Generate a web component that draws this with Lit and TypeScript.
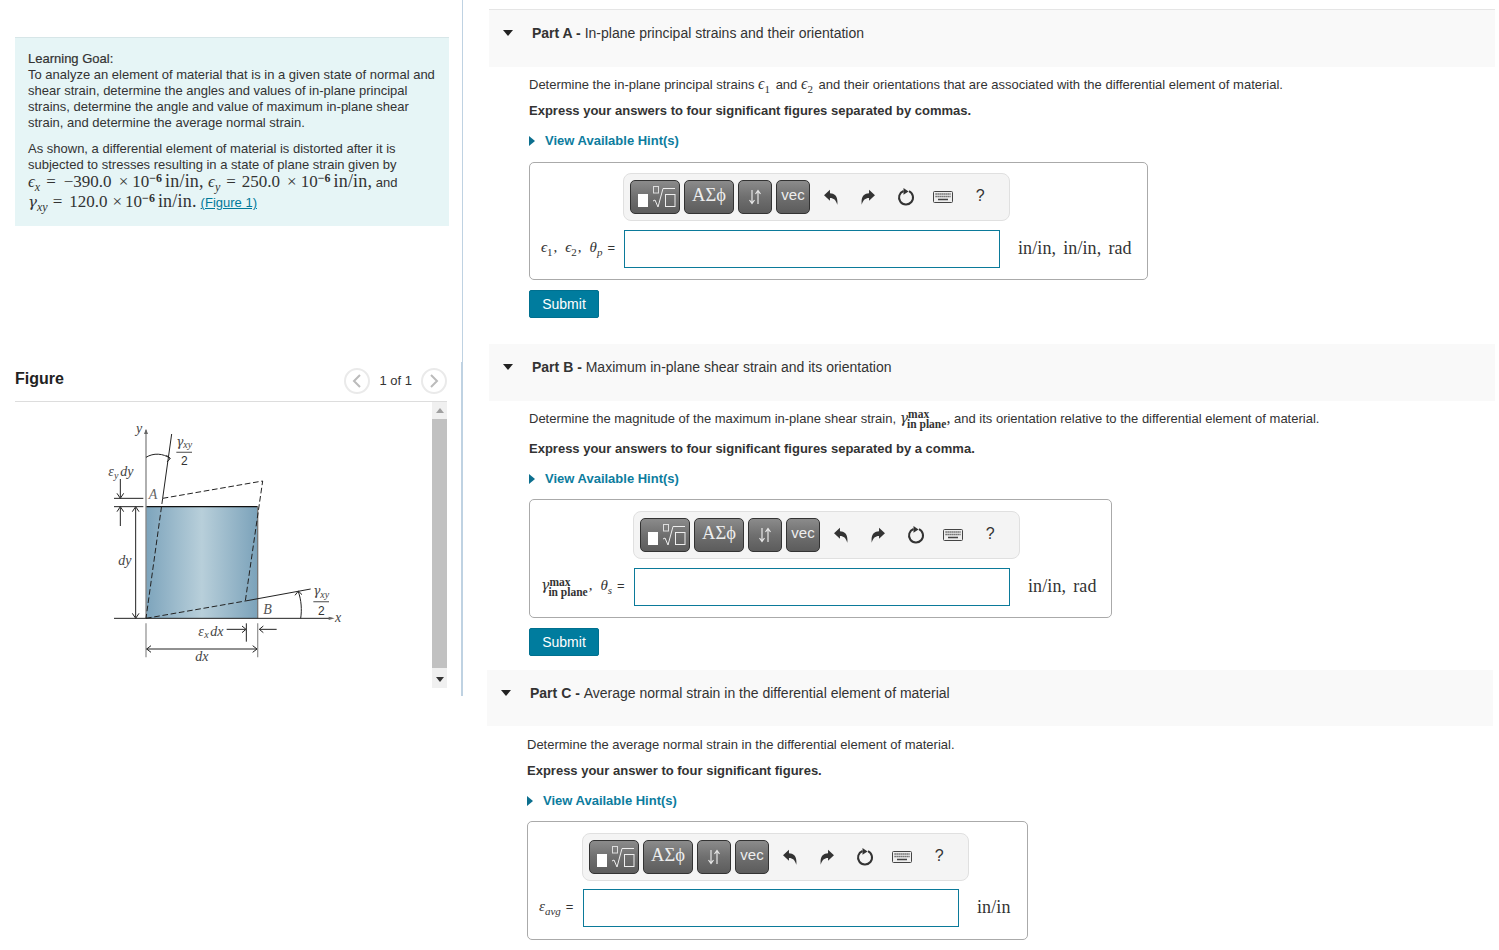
import { LitElement, html, css, svg } from "lit";
import { customElement } from "lit/decorators.js";

const undoIcon = (flip = false) => html`<svg class=${flip ? "flip" : ""} width="14" height="16" viewBox="0 0 40 46"><path d="M0 18 L17 2 V12 C31 12 41 22 38 45 C34 32 28 26 17 26 V34 Z" fill="#333"/></svg>`;
const resetIcon = html`<svg width="18" height="18" viewBox="0 0 18 18"><path d="M6.500 3 A7 7 0 1 0 12 3.200" fill="none" stroke="#333" stroke-width="2"/><path d="M6.500 0 L11.500 3.400 L6.500 6.800 Z" fill="#333"/></svg>`;
const kbIcon = html`<svg width="20" height="12" viewBox="0 0 20 12"><rect x=".5" y=".5" width="19" height="11" rx="1" fill="#eee" stroke="#444"/><path d="M2.500 3h15M2.500 5.500h15" stroke="#444" stroke-width="1.400" stroke-dasharray="1.200 .8"/><path d="M5 8.500h10" stroke="#444" stroke-width="1.500"/></svg>`;
const tplIcon = html`<svg class="tpl" width="38" height="28" viewBox="0 0 38 28"><rect x="0" y="11" width="10" height="13" fill="#fff"/><rect x="15.500" y="3.500" width="5" height="6.500" fill="none" stroke="#ddd"/><path d="M15 18 l2 -1 l3 7 l5 -18.500 h12" fill="none" stroke="#eee" stroke-width="1"/><rect x="27.500" y="11.500" width="9.500" height="12" fill="none" stroke="#eee"/></svg>`;
const arrowsIcon = html`<svg width="14" height="16" viewBox="0 0 14 16"><path d="M4 1v13M1.500 11l2.500 3.500l2.500-3.500M10 15v-13M7.500 5l2.500-3.500l2.500 3.500" fill="none" stroke="#e8e8e8" stroke-width="1.200"/></svg>`;

const gammaFrac = (x: number, y: number) => svg`
  <text x=${x} y=${y} class="g">γ</text><text x=${x + 21} y=${y + 7} class="s">xy</text>
  <path d="M${x} ${y + 19}H${x + 47}" stroke="#777" stroke-width="4"/>
  <text x=${x + 14} y=${y + 58} class="n">2</text>`;

const diagram = html`<svg class="diagram" width="270" height="260" viewBox="0 0 810 780">
  <defs>
    <linearGradient id="m" x1="0" x2="1" y1="0" y2="0">
      <stop offset="0" stop-color="#7da4bc"/><stop offset=".5" stop-color="#b8cfda"/><stop offset="1" stop-color="#7ba2ba"/>
    </linearGradient>
  </defs>
  <style>
    .t{font:italic 42px "Liberation Serif",serif;fill:#444}
    .g{font:italic 36px "DejaVu Serif",serif;fill:#444}
    .s{font:italic 30px "Liberation Serif",serif;fill:#444}
    .n{font:36px "Liberation Sans",sans-serif;fill:#333}
    .ta{fill:#666}
    .tb{fill:#555}
  </style>
  <rect x="168" y="290" width="335" height="335" fill="url(#m)"/>
  <g fill="none" stroke-linecap="butt">
    <path d="M168 290H503" stroke="#111" stroke-width="4"/>
    <path d="M168 60V625" stroke="#888" stroke-width="4"/>
    <path d="M503 290V625" stroke="#777" stroke-width="4"/>
    <path d="M72 625H725" stroke="#222" stroke-width="3"/>
    <path d="M72 265H160M72 290H160" stroke="#222" stroke-width="3"/>
    <path d="M245 72L218 265" stroke="#222" stroke-width="3"/>
    <path d="M218 265L168 625M218 265L518 213L466 573M168 625L466 573" stroke="#222" stroke-width="3" stroke-dasharray="17 8"/>
    <path d="M466 573L662 537" stroke="#222" stroke-width="3"/>
    <path d="M168 142C190 128 220 130 240 145" stroke="#222" stroke-width="3"/>
    <path d="M632 625C636 600 634 570 625 545" stroke="#222" stroke-width="3"/>
    <path d="M91 207V262M91 348V293M137 293V622" stroke="#222" stroke-width="3"/>
    <path d="M168 640V742M503 640V742" stroke="#999" stroke-width="4"/>
    <path d="M170 717H501" stroke="#222" stroke-width="3"/>
    <path d="M410 658H466M469 640V695M560 658H508" stroke="#222" stroke-width="3"/>
    <path d="M81 250L91 265L101 250M81 305L91 290L101 305M127 305L137 290L147 305M127 610L137 625L147 610M183 707L170 717L183 727M488 707L501 717L488 727M456 648L468 658L456 668M520 648L508 658L520 668M229 136L241 145L231 156M615 556L625 543L636 554" stroke="#222" stroke-width="3"/>
  </g>
  <path d="M162 72L168 56L174 72ZM716 620L734 625L716 630Z" fill="#666"/>
  <text x="138" y="70" class="t">y</text>
  <text x="735" y="636" class="t">x</text>
  <text x="176" y="266" class="t ta">A</text>
  <text x="520" y="613" class="t tb">B</text>
  <text x="55" y="198" class="t">ε</text><text x="72" y="206" class="s">y</text><text x="91" y="198" class="t">dy</text>
  <text x="85" y="465" class="t">dy</text>
  <text x="325" y="677" class="t">ε</text><text x="343" y="684" class="s">x</text><text x="361" y="677" class="t">dx</text>
  <text x="316" y="753" class="t">dx</text>
  ${gammaFrac(259, 108)}
  ${gammaFrac(670, 556)}
</svg>`;

const eps = (s: unknown) => html`<span class="mi">ϵ</span><sub class="mr">${s}</sub>`;
const gammaStack = html`<span class="gam">γ</span><span class="stack"><span>max</span><span>in plane</span></span>`;

interface Part {
  cls: string;
  letter: string;
  title: string;
  desc: unknown;
  bold: string;
  label: unknown;
  unit: string;
  submit: boolean;
}

const parts: Part[] = [
  {
    cls: "a",
    letter: "A",
    title: "In-plane principal strains and their orientation",
    desc: html`Determine the in-plane principal strains <span class="m gapm">${eps(1)}</span> and <span class="m gapm">${eps(2)}</span> and their orientations that are associated with the differential element of material.`,
    bold: "Express your answers to four significant figures separated by commas.",
    label: html`<span class="m">${eps(1)}<span class="sep">,</span>${eps(2)}<span class="sep">,</span><span class="mi">θ</span><sub class="mi">p</sub></span><span class="eq">=</span>`,
    unit: "in/in, in/in, rad",
    submit: true,
  },
  {
    cls: "b",
    letter: "B",
    title: "Maximum in-plane shear strain and its orientation",
    desc: html`Determine the magnitude of the maximum in-plane shear strain, <span class="m">${gammaStack},</span> and its orientation relative to the differential element of material.`,
    bold: "Express your answers to four significant figures separated by a comma.",
    label: html`<span class="m">${gammaStack}<span class="sep">,</span><span class="mi">θ</span><sub class="mi">s</sub></span><span class="eq">=</span>`,
    unit: "in/in, rad",
    submit: true,
  },
  {
    cls: "c",
    letter: "C",
    title: "Average normal strain in the differential element of material",
    desc: html`Determine the average normal strain in the differential element of material.`,
    bold: "Express your answer to four significant figures.",
    label: html`<span class="m"><span class="mi">ε</span><sub class="mi">avg</sub></span><span class="eq">=</span>`,
    unit: "in/in",
    submit: false,
  },
];

@customElement("app-root")
export class AppRoot extends LitElement {
  static styles = css`
    :host { display: block; width: 1499px; height: 950px; overflow: hidden; background: #fff; color: #333; font: 13px/16px "Liberation Sans", Arial, sans-serif; }
    * { box-sizing: border-box; }
    .page { display: flex; align-items: flex-start; }
    .left { width: 463px; height: 696px; flex: none; border-right: 1px solid #bfd2e2; position: relative; padding: 37px 0 0 15px; }
    .left::after { content: ""; position: absolute; left: 461px; top: 362px; bottom: 0; width: 1px; background: #bfd2e2; }
    .goal { width: 434px; height: 189px; background: #e6f5f6; border-top: 1px solid #d7e6e8; padding: 13px 13px 0; }
    .goal p { margin: 0 0 10px; }
    .lg { -webkit-text-stroke: .2px #333; }
    .ml { display: block; height: 20px; line-height: 20px; white-space: nowrap; }
    .ml .m { font-size: 17px; }
    .ml sup { font-size: 12px; font-weight: bold; vertical-align: 5px; }
    .ml sub { font-size: 12px; }
    .rel { margin: 0 8px 0 6px; }
    .rel2 { margin: 0 6px; }
    .rel3 { margin: 0 7px 0 5px; }
    .tm { margin: 0 4px 0 7px; }
    .tm3 { margin: 0 3px 0 5px; }
    .in { font-size: 18px; letter-spacing: .2px; margin-left: 3px; }
    .goal-link { color: #00799a; text-decoration: underline; margin-left: 4px; }
    .m { font: 16px/16px "Liberation Serif", "DejaVu Serif", serif; color: #333; white-space: nowrap; }
    .gapm { margin-right: 2px; }
    .desc .m { line-height: 0; }
    .mi { font-family: "Liberation Serif", "DejaVu Serif", serif; font-style: italic; }
    .gam { font: italic 14px "DejaVu Serif", serif; }
    .ml .gam { font-size: 15px; }
    .mr { font-family: "Liberation Serif", serif; font-style: normal; }
    sub, sup { font-size: 11px; line-height: 0; }
    .stack { display: inline-flex; flex-direction: column; vertical-align: middle; font: bold 11.500px/10px "Liberation Serif", serif; margin: -4px 0 -4px -1px; }
    .stack span:first-child { padding-left: 1px; }
    .sep { margin-right: 8px; margin-left: 1px; }
    .eq { margin-left: 5px; }
    .fig-head { width: 432px; height: 40px; margin-top: 136px; display: flex; align-items: flex-start; justify-content: space-between; border-bottom: 1px solid #ddd; padding-top: 7px; }
    .fig-title { font-size: 16px; font-weight: bold; line-height: 20px; color: #222; }
    .pager { display: flex; align-items: center; gap: 9px; margin-top: -1px; }
    .pg { width: 26px; height: 26px; border: 2px solid #eaeaea; border-radius: 50%; display: flex; align-items: center; justify-content: center; background: #fff; }
    .view { display: flex; width: 432px; height: 286px; }
    .view-main { flex: 1; padding: 8px 0 0 75px; }
    .diagram { display: block; }
    .sb { width: 15px; background: #f0f0f0; display: flex; flex-direction: column; align-items: center; }
    .sb-arrow { height: 17px; flex: none; display: flex; align-items: center; justify-content: center; }
    .sb-arrow.down { margin-top: auto; }
    .sb-thumb { width: 15px; height: 249px; background: #c1c1c1; }
    .right { flex: 1; min-width: 0; padding: 9px 4px 0 26px; }
    .part-b { margin-top: 26px; }
    .part-c { margin: 14px 2px 0 -2px; }
    .header { height: 57px; background: #f9f9f9; display: flex; padding: 15px 0 0 14px; gap: 19px; font-size: 14px; }
    .part-a .header { height: 58px; border-top: 1px solid #e5e5e5; }
    .part-c .header { height: 56px; }
    .caret { width: 0; height: 0; border-left: 5.500px solid transparent; border-right: 5.500px solid transparent; border-top: 6px solid #222; margin-top: 5px; }
    .htitle b { color: #333; }
    .body { padding: 10px 0 0 40px; }
    .part-b .body { padding-top: 9px; }
    .part-c .body { padding-top: 11px; }
    .desc { height: 16px; margin: 0 0 10px; white-space: nowrap; }
    .part-b .desc { height: 21px; }
    .bold { margin: 0 0 14px; font-weight: bold; }
    .hint { display: flex; align-items: center; gap: 10px; font-weight: bold; color: #0c7c9e; }
    .hcaret { width: 0; height: 0; border-top: 5px solid transparent; border-bottom: 5px solid transparent; border-left: 6px solid #0c6f8e; }
    .box { width: fit-content; margin-top: 12px; border: 1px solid #aaa; border-radius: 5px; padding: 11px 16px 11px 11px; display: grid; grid-template-columns: auto 376px auto; row-gap: 9px; align-items: center; }
    .part-a .box { margin-top: 13px; padding-top: 10px; }
    .part-c .box { row-gap: 8px; padding-bottom: 12px; }
    .toolbar { grid-column: 2 / span 2; width: 387px; height: 48px; margin-left: -1px; display: flex; align-items: center; padding-left: 6px; background: #f4f4f4; border: 1px solid #e0e0e0; border-radius: 8px; }
    .btn { height: 34px; margin-right: 4px; border: 1px solid #333; border-radius: 5px; background: linear-gradient(#8b8b8b, #6f6f6f 50%, #5c5c5c); color: #eee; display: flex; align-items: center; justify-content: center; }
    .w50 { width: 50px; } .w34 { width: 34px; }
    .tpl { margin-left: 4px; }
    .greek { font: 18.500px/1 "Liberation Serif", serif; padding-bottom: 3px; }
    .vec { font-size: 15px; padding-bottom: 4px; }
    .slot { width: 37.250px; display: flex; justify-content: center; align-items: center; height: 34px; }
    .slot:nth-child(5) { margin-left: -1.500px; }
    .flip { transform: scaleX(-1); }
    .q { font-size: 16px; color: #333; padding-bottom: 2px; }
    .label { font-size: 13px; white-space: nowrap; padding-bottom: 3px; }
    .part-a .label { width: 83px; }
    .part-b .label { width: 93px; }
    .part-c .label { width: 44px; }
    .label .m { font-size: 15px; }
    input { width: 376px; height: 38px; border: 1px solid #0b7a9a; outline: none; background: #fff; padding: 0 6px; display: block; }
    .unit { margin-left: 18px; padding-bottom: 1px; font: 18px "Liberation Serif", serif; letter-spacing: .1px; word-spacing: 2.500px; white-space: nowrap; }
    .part-a .unit { width: 113px; }
    .part-b .unit { width: 67px; }
    .part-c .unit { width: 34px; }
    .submit { display: block; margin-top: 10px; width: 70px; height: 28px; background: #007c9e; border: 1px solid #00708f; border-radius: 2px; color: #fff; font: 14px "Liberation Sans", sans-serif; padding: 0; }
  `;

  renderPart(p: Part) {
    return html`<section class="part-${p.cls}">
      <div class="header"><span class="caret"></span><span class="htitle"><b>Part ${p.letter} - </b>${p.title}</span></div>
      <div class="body">
        <p class="desc">${p.desc}</p>
        <p class="bold">${p.bold}</p>
        <div class="hint"><span class="hcaret"></span>View Available Hint(s)</div>
        <div class="box">
          <div class="toolbar">
            <div class="btn w50">${tplIcon}</div>
            <div class="btn w50 greek">ΑΣϕ</div>
            <div class="btn w34">${arrowsIcon}</div>
            <div class="btn w34 vec">vec</div>
            <span class="slot">${undoIcon()}</span>
            <span class="slot">${undoIcon(true)}</span>
            <span class="slot">${resetIcon}</span>
            <span class="slot">${kbIcon}</span>
            <span class="slot q">?</span>
          </div>
          <div class="label">${p.label}</div>
          <input type="text" aria-label="answer" />
          <div class="unit">${p.unit}</div>
        </div>
        ${p.submit ? html`<button class="submit">Submit</button>` : ""}
      </div>
    </section>`;
  }

  render() {
    return html`<div class="page">
      <div class="left">
        <div class="goal">
          <p><span class="lg">Learning Goal:</span><br />To analyze an element of material that is in a given state of normal and shear strain, determine the angles and values of in-plane principal strains, determine the angle and value of maximum in-plane shear strain, and determine the average normal strain.</p>
          <div>As shown, a differential element of material is distorted after it is<br />subjected to stresses resulting in a state of plane strain given by
            <span class="ml"><span class="m"><span class="mi">ϵ</span><sub class="mi">x</sub><span class="rel">=</span>−390.0<span class="tm">×</span>10<sup>−6</sup><span class="in">in/in,</span> <span class="mi">ϵ</span><sub class="mi">y</sub><span class="rel2">=</span>250.0<span class="tm">×</span>10<sup>−6</sup><span class="in">in/in,</span></span> and</span>
            <span class="ml"><span class="m"><span class="gam">γ</span><sub class="mi">xy</sub><span class="rel3">=</span>120.0<span class="tm3">×</span>10<sup>−6</sup><span class="in">in/in.</span></span><span class="goal-link">(Figure 1)</span></span>
          </div>
        </div>
        <div class="fig-head">
          <span class="fig-title">Figure</span>
          <div class="pager">
            <span class="pg"><svg width="10" height="14" viewBox="0 0 10 14"><path d="M8 1L2 7l6 6" fill="none" stroke="#bbb" stroke-width="2"/></svg></span>
            <span>1 of 1</span>
            <span class="pg"><svg width="10" height="14" viewBox="0 0 10 14"><path d="M2 1l6 6l-6 6" fill="none" stroke="#bbb" stroke-width="2"/></svg></span>
          </div>
        </div>
        <div class="view">
          <div class="view-main">${diagram}</div>
          <div class="sb">
            <div class="sb-arrow"><svg width="8" height="5"><path d="M0 5L4 0l4 5Z" fill="#a0a0a0"/></svg></div>
            <div class="sb-thumb"></div>
            <div class="sb-arrow down"><svg width="8" height="5"><path d="M0 0l4 5l4-5Z" fill="#333"/></svg></div>
          </div>
        </div>
      </div>
      <div class="right">${parts.map((p) => this.renderPart(p))}</div>
    </div>`;
  }
}
